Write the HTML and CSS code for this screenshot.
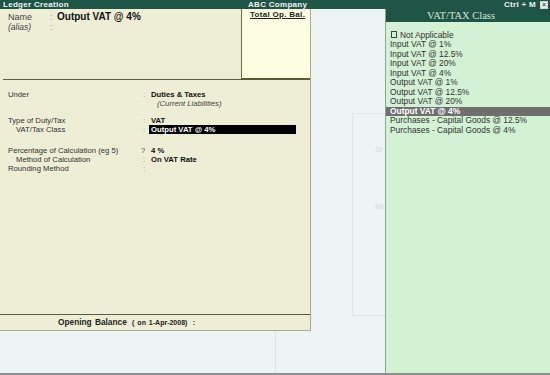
FILE: index.html
```html
<!DOCTYPE html>
<html lang="en">
<head>
    <meta charset="UTF-8">
    <meta name="viewport" content="width=device-width, initial-scale=1.0">
    <title>Ledger Creation</title>
    <link rel="stylesheet" href="styles.css">
</head>
<body>
    <div class="topbar">
        <span class="tb-title">Ledger Creation</span>
        <span class="tb-company">ABC Company</span>
        <span class="tb-keys">Ctrl + M</span>
        <span class="tb-close">&#215;</span>
    </div>

    <div class="screen">
        <div class="ledger-col">
            <div class="ledger">
                <div class="head">
                    <div class="name-area">
                        <div class="name-row">
                            <span class="name-lbl">Name</span>
                            <span class="name-sep">:</span>
                            <span class="name-val">Output VAT @ 4%</span>
                        </div>
                        <div class="name-row alias">
                            <span class="name-lbl"><i>(alias)</i></span>
                            <span class="name-sep">:</span>
                        </div>
                    </div>
                    <div class="opbal">Total Op. Bal.</div>
                </div>

                <div class="body">
                    <div class="row">
                        <span class="lbl">Under</span>
                        <span class="sep">:</span>
                        <span class="val">Duties &amp; Taxes</span>
                    </div>
                    <div class="row">
                        <span class="lbl"></span>
                        <span class="sep"></span>
                        <span class="val note"><i>(Current Liabilities)</i></span>
                    </div>

                    <div class="row gap-s">
                        <span class="lbl">Type of Duty/Tax</span>
                        <span class="sep">:</span>
                        <span class="val">VAT</span>
                    </div>
                    <div class="row">
                        <span class="lbl sub">VAT/Tax Class</span>
                        <span class="sep">:</span>
                        <span class="val active">Output VAT @ 4%</span>
                    </div>

                    <div class="row gap-l">
                        <span class="lbl">Percentage of Calculation (eg 5)</span>
                        <span class="sep q">?</span>
                        <span class="val">4 %</span>
                    </div>
                    <div class="row">
                        <span class="lbl sub">Method of Calculation</span>
                        <span class="sep">:</span>
                        <span class="val">On VAT Rate</span>
                    </div>
                    <div class="row">
                        <span class="lbl">Rounding Method</span>
                        <span class="sep">:</span>
                        <span class="val"></span>
                    </div>
                </div>

                <div class="footer">
                    Opening Balance <small>( on 1-Apr-2008)</small> <small>:</small>
                </div>
            </div>
            <div class="below"></div>
        </div>

        <div class="backdrop">
            <div class="ghost">
                <span>Sl</span>
                <span>Ml</span>
            </div>
        </div>

        <div class="popup">
            <div class="popup-title">VAT/TAX Class</div>
            <ul class="list">
                <li><span class="box"></span>Not Applicable</li>
                <li>Input VAT @ 1%</li>
                <li>Input VAT @ 12.5%</li>
                <li>Input VAT @ 20%</li>
                <li>Input VAT @ 4%</li>
                <li>Output VAT @ 1%</li>
                <li>Output VAT @ 12.5%</li>
                <li>Output VAT @ 20%</li>
                <li class="selected">Output VAT @ 4%</li>
                <li>Purchases - Capital Goods @ 12.5%</li>
                <li>Purchases - Capital Goods @ 4%</li>
            </ul>
        </div>
    </div>
</body>
</html>
```

FILE: styles.css
```css
body {
    margin: 0;
    width: 550px;
    height: 375px;
    overflow: hidden;
    font-family: 'Liberation Sans', Arial, sans-serif;
    background-color: #eef4f4;
    color: #333;
}

/* title strip */
.topbar {
    height: 9px;
    background: #1f5546;
    color: #f2f2f2;
    display: flex;
    align-items: center;
    font-size: 8px;
    font-weight: bold;
    line-height: 9px;
    letter-spacing: 0.3px;
}
.tb-title {
    width: 245px;
    padding-left: 3px;
}
.tb-company {
    flex: 1;
}
.tb-keys {
    margin-right: 4px;
}
.tb-close {
    width: 6px;
    height: 6px;
    margin-right: 2px;
    border: 1px solid #cfd8d4;
    background: #e8ecea;
    color: #555;
    font-size: 7px;
    line-height: 6px;
    letter-spacing: 0;
    text-align: center;
}

.screen {
    height: 364px;
    display: grid;
    grid-template-columns: 311px 74px 165px;
    border-bottom: 2px solid #8e8e8e;
}

/* left ledger form */
.ledger-col {
    display: flex;
    flex-direction: column;
}
.ledger {
    height: 321px;
    background: #eeeed6;
    border-right: 1px solid #a9a995;
    border-bottom: 1px solid #a9a995;
    display: flex;
    flex-direction: column;
}
.below {
    flex: 1;
    width: 275px;
    border-right: 1px solid #dde4e4;
}
.head {
    height: 71px;
    display: flex;
}
.name-area {
    flex: 1;
    margin-left: 3px;
    padding: 3px 0 0 5px;
    border-bottom: 1px solid #5d5d3c;
}
.name-row {
    display: flex;
    height: 10px;
    line-height: 10px;
    font-size: 9px;
    color: #444;
}
.name-row.alias {
    font-size: 8.5px;
}
.name-lbl {
    width: 42px;
}
.name-sep {
    width: 7px;
    color: #999;
}
.name-val {
    font-size: 10px;
    font-weight: bold;
    color: #111;
}
.opbal {
    width: 69px;
    background: #fefee2;
    border-left: 1px solid #6a6a48;
    border-bottom: 2px solid #5a5a34;
    padding: 1px 0 0 8px;
    box-sizing: border-box;
    font-size: 8px;
    font-weight: bold;
    letter-spacing: 0.3px;
    text-decoration: underline;
    color: #222;
}

.body {
    flex: 1;
    padding-top: 10px;
}
.row {
    display: flex;
    height: 9px;
    line-height: 9px;
    font-size: 7.7px;
}
.gap-s {
    margin-top: 8px;
}
.gap-l {
    margin-top: 12px;
}
.lbl {
    width: 135px;
    padding-left: 8px;
}
.lbl.sub {
    width: 127px;
    padding-left: 16px;
}
.sep {
    width: 6px;
    color: #999;
}
.sep.q {
    margin-left: -2px;
    width: 8px;
    color: #444;
}
.val {
    padding-left: 2px;
    font-weight: bold;
    color: #111;
}
.val.note {
    padding-left: 8px;
    font-weight: normal;
    color: #444;
}
.val.active {
    width: 145px;
    background: #000;
    color: #fff;
}

.footer {
    height: 15px;
    border-top: 1px solid #5d5d3c;
    padding-left: 58px;
    line-height: 15px;
    font-size: 8.3px;
    font-weight: bold;
    color: #222;
    word-spacing: 1px;
}
.footer small {
    font-size: 7px;
    margin-left: 2px;
}

/* faded window behind the popup */
.backdrop {
    overflow: hidden;
    padding: 104px 0 0 41px;
}
.ghost {
    height: 170px;
    border: 1px solid #e0e7e7;
    border-right: none;
    padding: 31px 0 0 22px;
    display: flex;
    flex-direction: column;
    gap: 48px;
    font-size: 8px;
    color: #d6dddd;
}

/* selection list */
.popup {
    height: 364px;
    background: #d3f1d5;
    border-left: 1px solid #8fa290;
    box-sizing: border-box;
}
.popup-title {
    height: 13px;
    background: #1f5546;
    color: #d3e3d8;
    text-align: center;
    font-family: 'Liberation Serif', 'Times New Roman', serif;
    font-size: 10.5px;
    line-height: 13px;
    padding-right: 14px;
}
.list {
    list-style: none;
    margin: 0;
    padding: 9px 0 0;
    font-size: 8.4px;
    line-height: 9.45px;
    color: #333;
}
.list li {
    padding-left: 4px;
}
.list .selected {
    background: #6f6f6f;
    color: #fff;
    font-weight: bold;
}
.box {
    display: inline-block;
    width: 4px;
    height: 5px;
    border: 1px solid #444;
    margin: 0 3px 0 1px;
}
```
